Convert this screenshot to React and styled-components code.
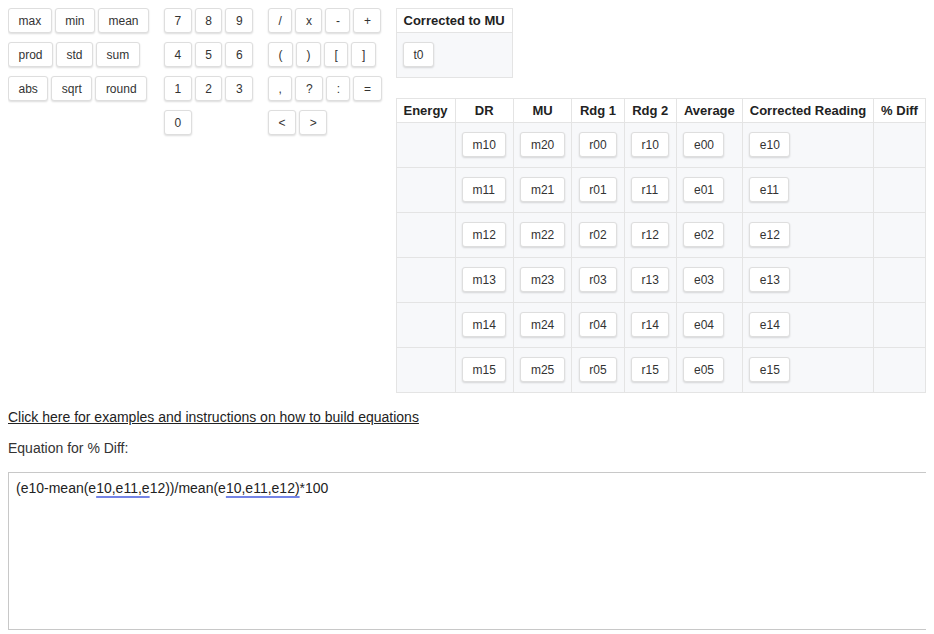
import React from 'react'
import styled, { createGlobalStyle } from 'styled-components'

const GlobalStyle = createGlobalStyle`
html { overflow-x: hidden; }
body {
  margin: 8px;
  font-family: "Liberation Sans", Arial, sans-serif;
  color: #222;
  background: #fff;
}
`;

const Top = styled.div`
display: flex;
align-items: flex-start;
`;

const Keypad = styled.div`
display: flex;
flex-direction: column;
gap: 9px;
margin-right: ${(p) => p.$space}px;
`;

const KeyRow = styled.div`
display: flex;
gap: 3px;
`;

const Key = styled.button`
height: 25px;
padding: 0 9.5px;
font-family: "Liberation Sans", Arial, sans-serif;
font-size: 12px;
color: #333;
background: #fff;
border: 1px solid #dedede;
border-radius: 3px;
box-shadow: 0 1px 2px rgba(0, 0, 0, 0.14);
cursor: pointer;
display: ${(p) => (p.$block ? 'block' : 'inline-block')};
`;

const Tables = styled.div`
display: flex;
flex-direction: column;
align-items: flex-start;
gap: 20px;
`;

const Table = styled.table`
border-collapse: collapse;
font-size: 13px;
th, td {
  border: 1px solid #e4e4e4;
}
th {
  background: #fff;
  font-weight: bold;
  padding: 4px 7px;
  text-align: center;
  white-space: nowrap;
  line-height: 15px;
}
td {
  background: #f7f8fa;
  padding: 9px 6.5px 10px;
  text-align: left;
}
`;

const HelpLink = styled.a`
display: block;
margin-top: 16px;
font-size: 14px;
line-height: 16px;
color: #222;
text-decoration: underline;
`;

const Label = styled.div`
margin-top: 15px;
font-size: 14px;
line-height: 16px;
color: #333;
`;

const EquationBox = styled.div`
margin-top: 16px;
width: 100%;
box-sizing: content-box;
height: 141px;
padding: 7px 7px 8px;
border: 1px solid #c8c8c8;
font-size: 14px;
line-height: 17px;
color: #222;
white-space: pre-wrap;
`;

const Checked = styled.span`
text-decoration: underline;
text-decoration-color: #7484e6;
text-decoration-thickness: 2px;
text-underline-offset: 3px;
`;

const functions = [
  ['max', 'min', 'mean'],
  ['prod', 'std', 'sum'],
  ['abs', 'sqrt', 'round'],
]
const digits = [['7', '8', '9'], ['4', '5', '6'], ['1', '2', '3'], ['0']]
const operators = [
  ['/', 'x', '-', '+'],
  ['(', ')', '[', ']'],
  [',', '?', ':', '='],
  ['<', '>'],
]

const headers = ['Energy', 'DR', 'MU', 'Rdg 1', 'Rdg 2', 'Average', 'Corrected Reading', '% Diff']
const rows = [0, 1, 2, 3, 4, 5]

const Pad = ({ keys, space }) => (
  <Keypad $space={space}>
    {keys.map((row, i) => (
      <KeyRow key={i}>
        {row.map((k) => (
          <Key key={k}>{k}</Key>
        ))}
      </KeyRow>
    ))}
  </Keypad>
)

const App = () => {
  return (
    <>
      <GlobalStyle />
      <Top>
        <Pad keys={functions} space={15} />
        <Pad keys={digits} space={15} />
        <Pad keys={operators} space={14} />
        <Tables>
          <Table>
            <thead>
              <tr>
                <th>Corrected to MU</th>
              </tr>
            </thead>
            <tbody>
              <tr>
                <td>
                  <Key $block>t0</Key>
                </td>
              </tr>
            </tbody>
          </Table>
          <Table>
            <thead>
              <tr>
                {headers.map((h) => (
                  <th key={h}>{h}</th>
                ))}
              </tr>
            </thead>
            <tbody>
              {rows.map((r) => (
                <tr key={r}>
                  <td></td>
                  <td><Key $block>{`m1${r}`}</Key></td>
                  <td><Key $block>{`m2${r}`}</Key></td>
                  <td><Key $block>{`r0${r}`}</Key></td>
                  <td><Key $block>{`r1${r}`}</Key></td>
                  <td><Key $block>{`e0${r}`}</Key></td>
                  <td><Key $block>{`e1${r}`}</Key></td>
                  <td></td>
                </tr>
              ))}
            </tbody>
          </Table>
        </Tables>
      </Top>
      <HelpLink href="#">Click here for examples and instructions on how to build equations</HelpLink>
      <Label>Equation for % Diff:</Label>
      <EquationBox>
        (e10-mean(e<Checked>10,e11,e</Checked>12))/mean(e<Checked>10,e11,e12)</Checked>*100
      </EquationBox>
    </>
  )
}

export default App
